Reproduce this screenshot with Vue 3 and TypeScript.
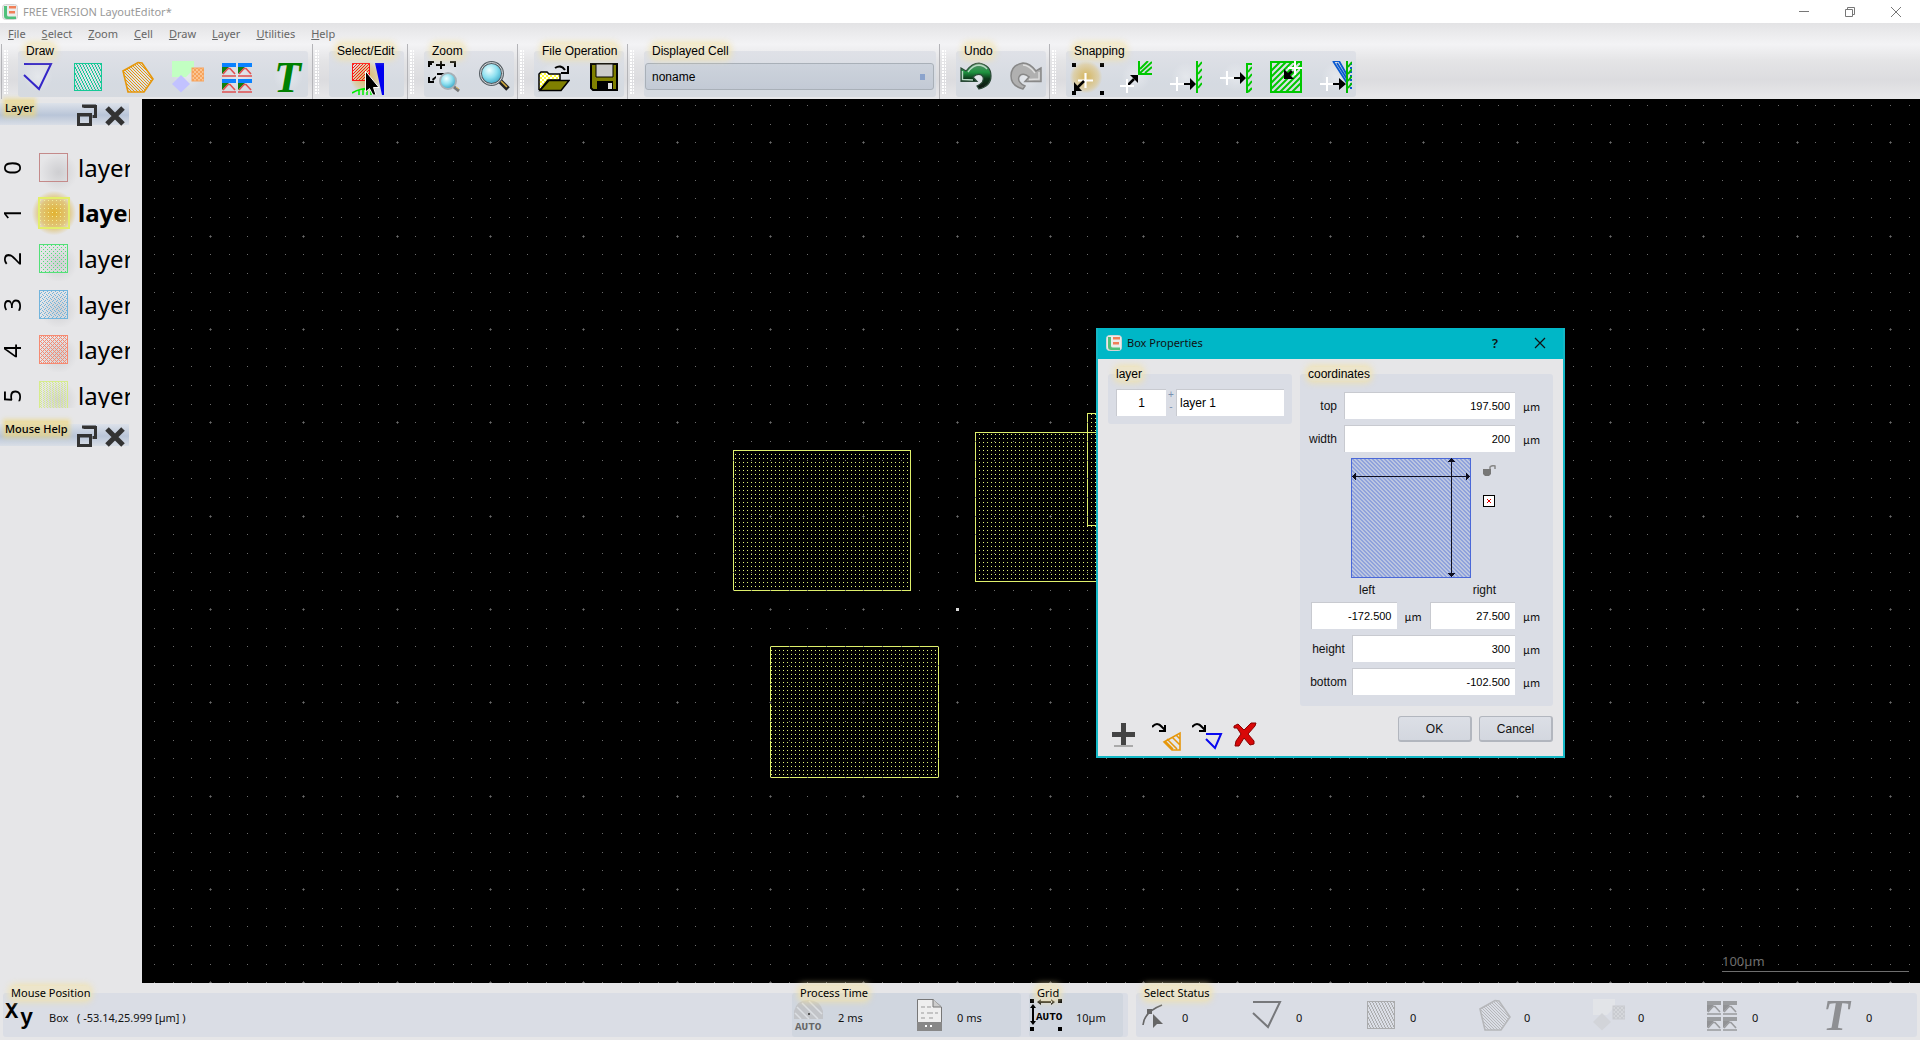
<script setup lang="ts">
import { ref } from 'vue'

interface ToolGroup {
  title: string
  icons: { id: string; name: string; active?: boolean }[]
}

const menus = ['File', 'Select', 'Zoom', 'Cell', 'Draw', 'Layer', 'Utilities', 'Help']

const leftGroups: ToolGroup[] = [
  {
    title: 'Draw',
    icons: [
      { id: 'i-path', name: 'Path' },
      { id: 'i-box', name: 'Box' },
      { id: 'i-polygon', name: 'Polygon' },
      { id: 'i-cellref', name: 'Cell reference' },
      { id: 'i-array', name: 'Cell array' },
      { id: 'i-text', name: 'Text' },
    ],
  },
  { title: 'Select/Edit', icons: [{ id: 'i-select', name: 'Select', active: true }] },
  { title: 'Zoom', icons: [{ id: 'i-zoomfit', name: 'Zoom fit' }, { id: 'i-zoom', name: 'Zoom' }] },
  { title: 'File Operation', icons: [{ id: 'i-open', name: 'Open' }, { id: 'i-save', name: 'Save' }] },
]

const rightGroups: ToolGroup[] = [
  { title: 'Undo', icons: [{ id: 'i-undo', name: 'Undo' }, { id: 'i-redo', name: 'Redo' }] },
  {
    title: 'Snapping',
    icons: [
      { id: 'i-snapgrid', name: 'Snap to grid', active: true },
      { id: 'i-snapcorner', name: 'Snap to corner' },
      { id: 'i-snapedge', name: 'Snap to edge' },
      { id: 'i-snapmid', name: 'Snap to midpoint' },
      { id: 'i-snapinside', name: 'Snap to center' },
      { id: 'i-snapcross', name: 'Snap to intersection' },
    ],
  },
]

const layers = [
  { n: 0, color: '#c48a8a', fill: 'none' },
  { n: 1, color: '#e3ee6a', fill: 'url(#p-l1)', current: true },
  { n: 2, color: '#52e078', fill: 'url(#p-l2)' },
  { n: 3, color: '#72b4dc', fill: 'url(#p-l3)' },
  { n: 4, color: '#f58a72', fill: 'url(#p-l4)' },
  { n: 5, color: '#d6ec8c', fill: 'url(#p-l5)' },
]

const selectStatus = [
  { id: 'i-node', cls: '' },
  { id: 'i-path', cls: 'dim' },
  { id: 'i-box', cls: 'dim strong' },
  { id: 'i-polygon', cls: 'dim' },
  { id: 'i-cellref', cls: 'dim faint' },
  { id: 'i-array', cls: 'dim' },
  { id: 'i-text', cls: 'dim' },
]

const position = 'Box   ( -53.14,25.999 [µm] )'

// Drawing origin on the canvas and the size of ten micrometres.
const origin = { x: 815, y: 510 }
const step = 56 / 3

let minor = ''
let major = ''
for (let j = -27; j <= 60; j++) {
  const y = Math.round(origin.y + j * step)
  for (let i = -43; i <= 100; i++) {
    const x = Math.floor(origin.x + i * step + 0.1)
    minor += `M${x} ${y}h1v1h-1z`
    if (i % 5 === 0 && j % 5 === 0) major += `M${x - 1} ${y}h3v1h-3zM${x} ${y - 1}h1v3h-1z`
  }
}

const shapes = [
  { x: 591, y: 351, w: 177, h: 140 },
  { x: 833, y: 333, w: 210, h: 149 },
  { x: 945, y: 314, w: 130, h: 112 },
  { x: 628, y: 547, w: 168, h: 131 },
]

const cell = ref('noname')
const layerNo = ref(1)
const layerName = ref('layer 1')
const box = ref({ top: '197.500', width: '200', left: '-172.500', right: '27.500', height: '300', bottom: '-102.500' })
</script>

<template>
  <div class="window">
    <svg class="defs" width="0" height="0" aria-hidden="true">
      <defs>
        <pattern id="p-dots" x="1" y="3" width="4" height="4" patternUnits="userSpaceOnUse"><rect width="1" height="1" fill="#e3f57a" /></pattern>
        <pattern id="p-l1" width="4" height="4" patternUnits="userSpaceOnUse"><rect x="1" y="1" width="1" height="1" fill="#f2ee9a" /></pattern>
        <pattern id="p-l2" width="4" height="4" patternUnits="userSpaceOnUse"><path d="M0 0h1v1h-1zM2 2h1v1h-1z" fill="#52e078" /></pattern>
        <pattern id="p-l3" width="4" height="4" patternUnits="userSpaceOnUse"><path d="M0 0h1v1h-1zM2 1h1v1h-1zM1 2h1v1h-1zM3 3h1v1h-1z" fill="#72b4dc" /></pattern>
        <pattern id="p-l4" width="4" height="4" patternUnits="userSpaceOnUse"><path d="M0 0h1v1h-1zM1 1h1v1h-1zM2 2h1v1h-1zM3 3h1v1h-1zM2 0h1v1h-1zM0 2h1v1h-1z" fill="#f58a72" /></pattern>
        <pattern id="p-l5" width="3" height="2" patternUnits="userSpaceOnUse"><path d="M0 0h1v1h-1zM1 1h1v1h-1z" fill="#d6ec8c" /></pattern>
        <pattern id="p-teal" width="3" height="6" patternUnits="userSpaceOnUse"><path d="M0 0h1v2h-1zM1 2h1v2h-1zM2 4h1v2h-1z" fill="#16c896" /></pattern>
        <pattern id="p-orange" width="3" height="3" patternUnits="userSpaceOnUse"><path d="M0 0h1v1h-1zM1 1h1v1h-1zM2 2h1v1h-1z" fill="#e6970a" /></pattern>
        <pattern id="p-red" width="3" height="3" patternUnits="userSpaceOnUse"><path d="M2 0h1v1h-1zM1 1h1v1h-1zM0 2h1v1h-1z" fill="#ff1414" /></pattern>
        <pattern id="p-check" width="4" height="4" patternUnits="userSpaceOnUse"><rect width="4" height="4" fill="#f7a35c" /><path d="M0 0h2v2h-2zM2 2h2v2h-2z" fill="#fbc592" /></pattern>
        <pattern id="p-yellow" width="4" height="4" patternUnits="userSpaceOnUse"><rect width="4" height="4" fill="#fffb3a" /><path d="M0 0h2v2h-2zM2 2h2v2h-2z" fill="#fff" /></pattern>
        <pattern id="p-blue" width="4" height="4" patternUnits="userSpaceOnUse"><rect width="4" height="4" fill="#bcc6e0" /><path d="M0 0h2v1h-2zM1 1h2v1h-2zM2 2h2v1h-2zM3 3h1v1h-1zM0 3h1v1h-1z" fill="#8fa2dc" /></pattern>
        <radialGradient id="g-lens" cx="0.4" cy="0.35" r="0.7">
          <stop offset="0" stop-color="#f0ffff" /><stop offset="0.5" stop-color="#8ee0f0" /><stop offset="1" stop-color="#2e9fc0" />
        </radialGradient>
        <linearGradient id="g-undo" x1="0" y1="0" x2="0" y2="1">
          <stop offset="0" stop-color="#5f8f72" /><stop offset="0.35" stop-color="#1f9440" /><stop offset="0.6" stop-color="#0c3a1a" /><stop offset="1" stop-color="#101010" />
        </linearGradient>

        <symbol id="i-logo" viewBox="0 0 16 16">
          <rect x="0.5" y="0.5" width="15" height="15" rx="3" fill="#ececec" stroke="#d4d4d4" />
          <path d="M2 2h3v9q0 1.500 2 1.500h7v2.500h-9q-3 0-3-3z" fill="#4fc07a" />
          <path d="M7 2h7v2.500h-7zM7 7h6v2.500h-6z" fill="#f08058" />
        </symbol>
        <symbol id="i-path" viewBox="0 0 32 32">
          <path d="M2 3H29L17 28 2 14" fill="none" stroke="#3426c8" stroke-width="2" />
        </symbol>
        <symbol id="i-box" viewBox="0 0 32 32">
          <rect x="2.500" y="2.500" width="27" height="27" fill="url(#p-teal)" stroke="#16c896" shape-rendering="crispEdges" />
        </symbol>
        <symbol id="i-polygon" viewBox="0 0 32 32">
          <path d="M16 1.500L20 2 31 18 22 31H6L1 10z" fill="url(#p-orange)" stroke="#e6970a" stroke-width="1.600" />
        </symbol>
        <symbol id="i-cellref" viewBox="0 0 32 32">
          <path d="M0 0H22V6L18 12 14 16H0z" fill="#c2ffc2" />
          <rect x="20" y="7" width="12" height="13" fill="url(#p-check)" stroke="#f7a35c" />
          <path d="M9 14L18 23 9 31.500 0 23z" fill="#c2c2ff" />
        </symbol>
        <symbol id="i-mini" viewBox="0 0 14 14">
          <path d="M0 0h14v4h-14z" fill="#0a82ff" />
          <path d="M0 4h7l-7 7z" fill="#108010" />
          <path d="M1 11L6 5.500H8L13 11M0 13h14" fill="none" stroke="#e05050" stroke-width="1.600" />
        </symbol>
        <symbol id="i-array" viewBox="0 0 32 32">
          <use href="#i-mini" x="0" y="2" width="14" height="14" />
          <use href="#i-mini" x="16" y="2" width="14" height="14" />
          <use href="#i-mini" x="0" y="18" width="14" height="14" />
          <use href="#i-mini" x="16" y="18" width="14" height="14" />
        </symbol>
        <symbol id="i-text" viewBox="0 0 32 32">
          <text x="2" y="31" font-family="'Liberation Serif', serif" font-size="44" font-weight="700" font-style="italic" fill="#008000">T</text>
        </symbol>
        <symbol id="i-select" viewBox="0 0 32 32">
          <rect x="0.500" y="0.500" width="17" height="17" fill="url(#p-red)" stroke="#ff1414" shape-rendering="crispEdges" />
          <path d="M23 0h9v32h-2L27 18z" fill="#0000f0" />
          <path d="M0 30Q8 25 20 25M7 27v5M11 26v6M15 25v7M19 25v7" fill="none" stroke="#00f000" stroke-width="1.500" />
          <path d="M13.500 8V29L17.500 25.500 21 32H24L21.500 24.500H27z" fill="#000" stroke="#fff" />
        </symbol>
        <symbol id="i-zoomfit" viewBox="0 0 32 32">
          <path d="M0 0h6v2h-4v4h-2zM2 2h2v2h-2zM22 0h6v6h-2v-4h-4zM12 0h2v3h3v2h-3v3h-2v-3h-4v-2h4zM0 16h2v4h4v2h-6zM4 18l4-3v2l-3 3zM9 12h7v2h-7z" fill="#000" />
          <circle cx="20" cy="20" r="8" fill="url(#g-lens)" stroke="#a8b0b6" stroke-width="2" />
          <path d="M26 26L31 30" stroke="#777" stroke-width="3" />
          <path d="M28 26L31 28" stroke="#e8c060" stroke-width="1" />
        </symbol>
        <symbol id="i-zoom" viewBox="0 0 32 32">
          <path d="M22 20L30 28" stroke="#222" stroke-width="5" />
          <path d="M23 20L29 26" stroke="#d8b040" stroke-width="1.500" />
          <circle cx="13.500" cy="12.500" r="11" fill="url(#g-lens)" stroke="#565e64" stroke-width="3" />
          <circle cx="13.500" cy="12.500" r="11" fill="none" stroke="#d8dde0" stroke-width="1" />
        </symbol>
        <symbol id="i-open" viewBox="0 0 32 32">
          <path d="M1 29V13L3 11H9L11 13H22V19H10L2 29" fill="url(#p-yellow)" stroke="#000" stroke-width="1.500" />
          <path d="M2 29.500L11 19.500H31L23 29.500z" fill="#808000" stroke="#000" stroke-width="1.500" />
          <path d="M17 7Q23 3 27 9M30 5V12H23" fill="none" stroke="#000" stroke-width="2" />
        </symbol>
        <symbol id="i-save" viewBox="0 0 32 32">
          <path d="M3 3H29V29H5L3 27z" fill="#808000" stroke="#000" stroke-width="2" />
          <path d="M8 3H25V16H8z" fill="#ccc" stroke="#000" />
          <path d="M9 20H25V29H9z" fill="#000" />
          <path d="M20 22h4v6h-4z" fill="#ddd" />
        </symbol>
        <symbol id="i-undo" viewBox="0 0 32 32">
          <path d="M1 7L6 10Q12 2 19 2Q31 4 31 15Q31 25 19 28L17 25Q25 21 23 16Q21 12 16 14L13 16 17 20.500H1z" fill="url(#g-undo)" stroke="#2c4a38" stroke-width="1.200" />
          <path d="M2.500 10V18.500L13 19M8 11Q13 4 19 4Q24 4.500 27 8" fill="none" stroke="#b8d8c4" stroke-width="1.400" />
        </symbol>
        <symbol id="i-redo" viewBox="0 0 32 32">
          <path d="M31 7L26 10Q20 2 13 2Q1 4 1 15Q1 25 13 28L15 25Q7 21 9 16Q11 12 16 14L19 16 15 20.500H31z" fill="#b0b0b0" stroke="#888" stroke-width="1.500" />
          <path d="M29 11V18L19 18.500M25 12Q19 4 13 4" fill="none" stroke="#dedede" stroke-width="1.400" />
        </symbol>
        <symbol id="i-cross" viewBox="0 0 14 14"><path d="M6 0h2v6h6v2h-6v6h-2v-6h-6v-2h6z" fill="#fff" /></symbol>
        <symbol id="i-snapgrid" viewBox="0 0 32 32">
          <path d="M0 0h4v4h-4zM28 0h4v4h-4zM0 28h4v4h-4zM28 28h4v4h-4z" fill="#000" />
          <use href="#i-cross" x="6" y="10" width="15" height="15" />
          <path d="M12 18L5 25" stroke="#000" stroke-width="2.500" /><path d="M2 19V28H10z" fill="#000" />
        </symbol>
        <symbol id="i-snapcorner" viewBox="0 0 32 32">
          <path d="M19 0V13H32M20 8L28 0M20 12L32 1M25 12L32 6" fill="none" stroke="#00c800" stroke-width="2" />
          <path d="M8 24L14 18" stroke="#000" stroke-width="2.500" /><path d="M10 14H18V22z" fill="#000" />
          <use href="#i-cross" x="0" y="18" width="14" height="14" />
        </symbol>
        <symbol id="i-snapedge" viewBox="0 0 32 32">
          <path d="M27 0V32M28 6L32 1M28 13L32 8M28 20L32 15M28 27L32 22" fill="none" stroke="#00c800" stroke-width="2" />
          <use href="#i-cross" x="0" y="16" width="14" height="14" />
          <path d="M14 22h6v-5l6 6-6 6v-5h-6z" fill="#000" />
        </symbol>
        <symbol id="i-snapmid" viewBox="0 0 32 32">
          <path d="M27 2V32M27 3H32M28 11L32 6M28 18L32 13M28 25L32 20M28 31L32 27" fill="none" stroke="#00c800" stroke-width="2" />
          <use href="#i-cross" x="0" y="10" width="14" height="14" />
          <path d="M14 16h6v-5l6 6-6 6v-5h-6z" fill="#000" />
        </symbol>
        <symbol id="i-snapinside" viewBox="0 0 32 32">
          <path d="M1 1H31V31H1zM1 10L10 1M1 16L16 1M1 22L22 1M1 28L28 1M4 31L31 4M10 31L31 10M16 31L31 16M22 31L31 22" fill="none" stroke="#00c800" stroke-width="2" />
          <use href="#i-cross" x="18" y="0" width="14" height="14" />
          <path d="M22 10L17 15" stroke="#000" stroke-width="3" /><path d="M14 8V18H24z" fill="#000" />
        </symbol>
        <symbol id="i-snapcross" viewBox="0 0 32 32">
          <path d="M13 0L27 22M13 0H19L27 14M17 2L27 18" fill="none" stroke="#0a5ad0" stroke-width="1.800" />
          <path d="M31 2V30" stroke="#0a5ad0" stroke-width="2" stroke-dasharray="2 2" />
          <path d="M27 0V32M28 6L32 1M28 13L32 8M28 20L32 15M28 27L32 22" fill="none" stroke="#00b800" stroke-width="2" />
          <use href="#i-cross" x="0" y="16" width="14" height="14" />
          <path d="M13 22h6v-5l7 6-7 6v-5h-6z" fill="#000" />
        </symbol>
        <symbol id="i-node" viewBox="0 0 32 32">
          <path d="M6 26Q7 13 25 6" fill="none" stroke="#666" stroke-width="1.600" />
          <path d="M10 10h5v5h-5zM16 15V29L20 25H26z" fill="#666" />
        </symbol>
      </defs>
    </svg>

    <header class="titlebar">
      <svg class="logo"><use href="#i-logo" /></svg>
      <span class="title">FREE VERSION LayoutEditor*</span>
      <div class="win-btns">
        <button aria-label="Minimize"><svg width="12" height="12"><path d="M1 5.500h10" stroke="#777" /></svg></button>
        <button aria-label="Restore"><svg width="12" height="12"><path d="M1.500 3.500h7v7h-7zM3.500 3.500v-2h7v7h-2" fill="none" stroke="#777" /></svg></button>
        <button aria-label="Close"><svg width="12" height="12"><path d="M1 1L11 11M11 1L1 11" stroke="#777" /></svg></button>
      </div>
    </header>

    <div class="chrome">
      <nav class="menubar">
        <a v-for="m in menus" :key="m" href="#"><u>{{ m[0] }}</u>{{ m.slice(1) }}</a>
      </nav>

      <div class="toolbars">
        <section v-for="g in leftGroups" :key="g.title" class="toolbar">
          <div class="group" :class="{ single: g.icons.length === 1 }">
            <span class="group-title">{{ g.title }}</span>
            <button v-for="i in g.icons" :key="i.id" :aria-label="i.name" :class="{ active: i.active }">
              <svg><use :href="'#' + i.id" /></svg>
            </button>
          </div>
        </section>
        <section class="toolbar">
          <div class="group cell-group">
            <label class="group-title" for="cell">Displayed Cell</label>
            <select id="cell" v-model="cell"><option>noname</option></select>
          </div>
        </section>
        <section v-for="g in rightGroups" :key="g.title" class="toolbar">
          <div class="group">
            <span class="group-title">{{ g.title }}</span>
            <button v-for="i in g.icons" :key="i.id" :aria-label="i.name" :class="{ active: i.active }">
              <svg><use :href="'#' + i.id" /></svg>
            </button>
          </div>
        </section>
      </div>
    </div>

    <main class="work">
      <aside class="side">
        <div class="dock-head">
          <h2><span>Layer</span></h2>
          <button aria-label="Float"><svg width="20" height="22"><path d="M6.500 2.500h12v10h-3M5 2h14" fill="none" stroke="#333" stroke-width="3" /><path d="M1.500 10.500h12v10h-12zM1 11h13" fill="none" stroke="#333" stroke-width="3" /></svg></button>
          <button aria-label="Close"><svg width="20" height="22"><path d="M2 4L18 20M18 4L2 20" stroke="#333" stroke-width="5" /></svg></button>
        </div>
        <div class="layer-view">
          <ul class="layers">
            <li v-for="l in layers" :key="l.n" :class="{ current: l.current }">
              <span class="num">{{ l.n }}</span>
              <svg class="swatch" width="46" height="44" shape-rendering="crispEdges">
                <rect v-if="l.current" x="8" y="7" width="30" height="30" :fill="l.fill" :stroke="l.color" stroke-width="2" />
                <rect v-else x="8.500" y="7.500" width="28" height="28" :fill="l.fill" :stroke="l.color" />
              </svg>
              <span class="name">layer {{ l.n }}</span>
            </li>
          </ul>
        </div>
        <div class="dock-head">
          <h2><span>Mouse Help</span></h2>
          <button aria-label="Float"><svg width="20" height="22"><path d="M6.500 2.500h12v10h-3M5 2h14" fill="none" stroke="#333" stroke-width="3" /><path d="M1.500 10.500h12v10h-12zM1 11h13" fill="none" stroke="#333" stroke-width="3" /></svg></button>
          <button aria-label="Close"><svg width="20" height="22"><path d="M2 4L18 20M18 4L2 20" stroke="#333" stroke-width="5" /></svg></button>
        </div>
      </aside>

      <div class="stage">
        <svg class="drawing" shape-rendering="crispEdges">
          <rect v-for="(s, k) in shapes" :key="k" :x="s.x + 0.5" :y="s.y + 0.5" :width="s.w" :height="s.h" fill="url(#p-dots)" stroke="#dff06c" />
          <path :d="major" fill="#4a4a4a" />
          <path :d="minor" fill="#6c6c6c" />
          <rect :x="origin.x - 1" :y="origin.y - 1" width="3" height="3" fill="#d8d8d8" />
        </svg>
        <div class="scale">100µm</div>

        <section class="dialog" role="dialog" aria-label="Box Properties">
          <div class="dlg-title">
            <svg class="logo"><use href="#i-logo" /></svg>
            <span class="title">Box Properties</span>
            <button aria-label="Help">?</button>
            <button aria-label="Close"><svg width="12" height="12"><path d="M1 1L11 11M11 1L1 11" stroke="#111" stroke-width="1.200" /></svg></button>
          </div>
          <div class="dlg-body">
            <div class="panel layer-panel">
              <span class="group-title">layer</span>
              <input v-model="layerNo" class="lnum" aria-label="Layer number">
              <div class="spin"><button aria-label="Increase">+</button><button aria-label="Decrease">-</button></div>
              <input v-model="layerName" class="lname" aria-label="Layer name">
            </div>
            <div class="panel coords">
              <span class="group-title">coordinates</span>
              <div class="row"><label for="top">top</label><input id="top" v-model="box.top"><span class="unit">μm</span></div>
              <div class="row"><label for="width">width</label><input id="width" v-model="box.width"><span class="unit">μm</span></div>
              <div class="figure">
                <svg width="120" height="120" shape-rendering="crispEdges">
                  <rect x="0.500" y="0.500" width="119" height="119" fill="url(#p-blue)" stroke="#4a68d8" />
                  <path d="M1 18.500H119M100.500 1V119" stroke="#101020" />
                  <path d="M1 18.500l4-3.500v7zM119 18.500l-4-3.500v7zM100.500 0l4 4h-8zM100.500 119l4-4h-8z" fill="#101020" />
                </svg>
                <div class="marks">
                  <svg width="14" height="12"><path d="M0 4h8v5l-2 2h-4l-2-2z" fill="#777" /><path d="M7 4V2Q9 0 12 1V4" fill="none" stroke="#888" stroke-width="1.500" /></svg>
                  <svg width="12" height="12" shape-rendering="crispEdges"><rect x="0.500" y="0.500" width="11" height="11" fill="#fff" stroke="#000" /><path d="M4 4L8 8M8 4L4 8" stroke="#e80000" shape-rendering="auto" /></svg>
                </div>
              </div>
              <div class="pair-labels"><label for="left">left</label><label for="right">right</label></div>
              <div class="row pair"><input id="left" v-model="box.left"><span class="unit">μm</span><input id="right" v-model="box.right"><span class="unit">μm</span></div>
              <div class="row low"><label for="height">height</label><input id="height" v-model="box.height"><span class="unit">μm</span></div>
              <div class="row low"><label for="bottom">bottom</label><input id="bottom" v-model="box.bottom"><span class="unit">μm</span></div>
            </div>
          </div>
          <div class="dlg-foot">
            <button class="tool" aria-label="Add"><svg width="32" height="30"><path d="M9 1h5v9h9v5h-9v8h-5v-8h-9v-5h9z" fill="#444" /><path d="M2 24h19" stroke="#aaa" stroke-width="2" /></svg></button>
            <button class="tool" aria-label="To polygon"><svg width="32" height="30"><path d="M0 5Q5 -1 10 5L13 8M13 3V9H7" fill="none" stroke="#000" stroke-width="2" /><path d="M28 11V28H20L12 20zM15 17L25 27M20 15L28 23M24 13L28 17M13 19L21 27" fill="none" stroke="#e6970a" stroke-width="1.600" /></svg></button>
            <button class="tool" aria-label="To path"><svg width="32" height="30"><path d="M0 5Q5 -1 10 5L13 8M13 3V9H7" fill="none" stroke="#000" stroke-width="2" /><path d="M14 12H29L23 26 14 17" fill="none" stroke="#0a0af0" stroke-width="2" /></svg></button>
            <button class="tool" aria-label="Delete"><svg width="32" height="30"><path d="M2 4L6 2L12 8L19 1H24L23 4L16 12L22 19V22L18 23L12 16L7 24H3L4 19L9 12L5 6H2z" fill="#d80808" stroke="#8a0000" /></svg></button>
            <button class="push ok">OK</button>
            <button class="push">Cancel</button>
          </div>
        </section>
      </div>
    </main>

    <footer class="status">
      <div class="sbox mouse">
        <span class="group-title">Mouse Position</span>
        <svg class="ic" aria-hidden="true"><text x="1" y="19" class="xy">X</text><text x="16" y="25" class="xy">y</text></svg>
        <span class="val pos">{{ position }}</span>
        <div class="sbox inner time">
          <span class="group-title">Process Time</span>
          <svg class="ic" aria-hidden="true">
            <path d="M1 20V12Q4 1 15 1Q27 1 30 12V20z" fill="#c2c4c8" /><path d="M4 8L16 20M9 4L25 20M16 2L29 15M2 14L8 20" stroke="#dcdfe3" stroke-width="1.500" /><path d="M15 14h2v2h-2z" fill="#555" />
            <text x="2" y="31" class="auto grey">AUTO</text>
          </svg>
          <span class="val">2 ms</span>
          <svg class="ic page" aria-hidden="true"><path d="M0.500 0.500H16L24.500 8V31.500H0.500z" fill="#eee" stroke="#777" /><path d="M0 23H25V32H0z" fill="#888" /><path d="M16 0V8H24" fill="#ccc" stroke="#777" /><path d="M4 8h4M10 8h4M4 14h3M10 14h6M18 14h3M4 19h4M12 19h4" stroke="#999" /><path d="M8 27h2M13 27h2" stroke="#fff" stroke-width="2" /></svg>
          <span class="val">0 ms</span>
        </div>
        <div class="sbox inner grid">
          <span class="group-title">Grid</span>
          <svg class="ic" aria-hidden="true">
            <path d="M0 0h4v4h-4zM28 0h4v4h-4zM0 28h4v4h-4zM28 28h4v4h-4zM10 2h12v2h-12zM7 3l4-3v6zM25 3l-4-3v6zM2 9h2v13h-2zM3 5l3 4h-6zM3 26l3-4h-6z" fill="#000" />
            <text x="6" y="21" class="auto">AUTO</text>
          </svg>
          <span class="val">10µm</span>
        </div>
      </div>
      <div class="sbox selected">
        <span class="group-title">Select Status</span>
        <div v-for="s in selectStatus" :key="s.id" class="stat">
          <svg class="ic" :class="s.cls" aria-hidden="true"><use :href="'#' + s.id" /></svg>
          <span class="val">0</span>
        </div>
      </div>
    </footer>
  </div>
</template>

<style>
body { margin: 0; background: #e6e6e8; }
</style>

<style scoped>
.window {
  display: flex;
  flex-direction: column;
  height: 100vh;
  font-family: 'Noto Sans', sans-serif;
  font-size: 11px;
  line-height: 16px;
  color: #111;
  background: #e6e6e8;
  overflow: hidden;
}
.window * { box-sizing: border-box; }
.defs { position: absolute; }
button { padding: 0; border: 0; background: none; font: inherit; color: inherit; }
svg { display: block; flex: none; }
.logo { width: 16px; height: 16px; }

.titlebar { display: flex; align-items: center; flex: none; height: 23px; padding: 0 1px 0 2px; background: #fff; color: #999; gap: 5px; }
.titlebar .title { flex: 1; }
.win-btns { display: flex; height: 20px; }
.win-btns button { display: flex; align-items: center; justify-content: center; width: 46px; }

.chrome { flex: none; background: linear-gradient(#e3e3e5, #f3f3f5 28%, #e4e4e6 50%, #dcdcdf 75%, #e8e8ea); }
.menubar { display: flex; height: 21px; }
.menubar a { padding: 3px 8px 0; color: #666; text-decoration: none; }

.toolbars { display: flex; height: 55px; padding-left: 1px; }
.toolbar { flex: none; display: flex; position: relative; padding: 7px 3px 2px 16px; border-left: 1px solid #b4b4b8; }
.toolbar:first-child { padding-right: 4px; }
.toolbar::before {
  content: '';
  position: absolute;
  left: 2px;
  top: 6px;
  width: 4px;
  height: 44px;
  background: radial-gradient(circle at 1px 1px, #fff 1px, transparent 1px) 0 0 / 3px 3px;
}
.group {
  position: relative;
  display: flex;
  gap: 18px;
  height: 46px;
  padding: 10px 4px 4px;
  border-radius: 3px;
  background: linear-gradient(#dfe1e7, #d5dae1 70%, #d6dae0);
}
.group.single { padding: 10px 22px 4px 21px; }
.group button { width: 32px; height: 32px; background: radial-gradient(circle, rgba(255, 255, 255, 0.35), transparent 65%); }
.group button svg { width: 32px; height: 32px; overflow: visible; }
.group button.active { padding: 2px 0 0 2px; background: radial-gradient(circle, rgba(214, 178, 80, 0.9), rgba(224, 196, 120, 0.5) 55%, transparent 72%); }
.group-title {
  position: absolute;
  left: 8px;
  top: -7px;
  font: 12px/14px 'Liberation Sans', sans-serif;
  color: #000;
  white-space: nowrap;
  border-radius: 4px;
  background: rgba(243, 228, 176, 0.55);
  box-shadow: 0 0 6px 2px rgba(243, 226, 166, 0.8);
}
.cell-group { width: 292px; padding: 12px 2px 7px 1px; }
.cell-group select {
  width: 100%;
  height: 27px;
  padding: 0 6px;
  appearance: none;
  border: 1px solid #a9b0b8;
  border-radius: 3px;
  font: 12px/14px 'Liberation Sans', sans-serif;
  color: #000;
  background: linear-gradient(#8ba3cc, #8ba3cc) right 8px center / 5px 6px no-repeat, linear-gradient(#cdd3dc, #c3cad5);
}

.work { display: flex; flex: 1; min-height: 0; }
.side { flex: none; width: 142px; padding-top: 4px; }
.dock-head { display: flex; width: 129px; height: 22px; gap: 8px; padding: 1px 4px 0 5px; background: linear-gradient(#dde2ea, #b9c5d8 55%, #d9dee6); }
.dock-head h2 { flex: 1; margin: -3px 0 0; font-size: 11px; line-height: 14px; font-weight: 500; color: #000; white-space: nowrap; }
.dock-head h2 span { background: rgba(236, 214, 120, 0.6); box-shadow: 0 0 4px 2px rgba(236, 214, 120, 0.6); }
.layer-view { width: 130px; height: 263px; margin: 20px 0 16px; overflow: hidden; }
.layers { display: grid; grid-template-rows: repeat(6, 1fr); height: 274px; margin: 0; padding: 0; list-style: none; }
.layers li { display: flex; align-items: center; font-size: 24px; line-height: 30px; color: #000; white-space: nowrap; }
.num { width: 24px; margin-right: 7px; line-height: 24px; text-align: center; writing-mode: vertical-rl; transform: rotate(180deg); }
.swatch { background: radial-gradient(circle at 60% 60%, rgba(170, 170, 175, 0.4), transparent 50%); }
.current .swatch { background: radial-gradient(circle, #e2b230, rgba(222, 184, 80, 0.7) 45%, transparent 70%); }
.name { margin-left: 1px; }
.current .name { font-weight: 700; }

.stage { position: relative; flex: 1; background: #000; overflow: hidden; }
.drawing { width: 100%; height: 100%; }
.scale { position: absolute; right: 11px; bottom: 11px; width: 187px; border-bottom: 1px solid #6e6e6e; font-size: 13px; line-height: 18px; padding-bottom: 1px; color: #6e6e6e; }

.dialog { position: absolute; left: 954px; top: 229px; width: 469px; border: 2px solid #14b8c6; border-top: 0; background: #e6e6e8; font: 12px/14px 'Liberation Sans', sans-serif; }
.dlg-title { display: flex; align-items: center; height: 31px; padding: 0 3px 1px 8px; gap: 5px; background: #00b7c7; font: 11px/16px 'Noto Sans', sans-serif; }
.dlg-title .title { flex: 1; }
.dlg-title button { display: flex; align-items: center; justify-content: center; width: 40px; height: 30px; font-size: 13px; font-weight: 600; }
.dlg-body { display: grid; grid-template-columns: 184px 1fr; align-items: start; gap: 8px; padding: 15px 10px 10px; }
.panel { position: relative; border-radius: 3px; background: #dadde5; }
.layer-panel { display: flex; height: 50px; padding: 15px 8px 8px; }
input { width: 0; height: 27px; padding: 0 5px; border: 0; border-top: 1px solid #c8cad0; border-left: 1px solid #c8cad0; border-radius: 0; background: #fff; font: 11px/14px 'Liberation Sans', sans-serif; color: #000; text-align: right; }
.lnum { flex: 0 0 50px; text-align: center; font-size: 12px; }
.spin { display: flex; flex-direction: column; width: 10px; }
.spin button { height: 12px; font-size: 10px; line-height: 12px; color: #7890b0; }
.lname { flex: 1; padding: 0 3px; font-size: 12px; text-align: left; }
.coords { height: 332px; padding: 18px 11px 0; }
.row { display: flex; align-items: center; margin-bottom: 6px; }
.row label { width: 26px; margin-right: 7px; display: flex; justify-content: flex-end; }
.row.low label { width: 35px; margin-right: 6px; justify-content: center; }
.row input { flex: 1; }
.unit { flex: none; width: 27px; padding-left: 8px; font: 11px/14px 'Noto Sans CJK JP', sans-serif; }
.pair .unit:nth-child(2) { width: 33px; }
.figure { display: flex; gap: 12px; padding-left: 40px; }
.marks { display: flex; flex-direction: column; gap: 18px; padding-top: 7px; }
.pair-labels { display: flex; justify-content: space-between; height: 24px; padding: 5px 46px 0 48px; }
.dlg-foot { display: flex; height: 40px; padding: 0 10px 0 14px; }
.tool { width: 40px; height: 30px; margin-top: 6px; }
.push { width: 74px; height: 26px; margin-left: 7px; border: 1px solid #b2b6be; border-right-width: 2px; border-bottom-width: 2px; border-radius: 3px; background: linear-gradient(#dcdfe6, #d3d7df); }
.ok { margin-left: auto; }

.status { display: flex; flex: none; height: 57px; gap: 8px; padding: 10px 3px 3px; }
.sbox { position: relative; display: flex; align-items: center; height: 44px; border-radius: 3px; background: #dadde5; }
.status .group-title { left: 8px; font: 11px/14px 'Noto Sans', sans-serif; }
.mouse { flex: 1; padding: 0 5px 0 1px; }
.selected { flex: none; width: 781px; padding-left: 1px; display: grid; grid-template-columns: repeat(6, 114px) auto; }
.sbox.inner { background: #d0d6df; }
.ic { width: 32px; height: 32px; overflow: visible; }
.pos { flex: 1; margin-left: 13px; white-space: pre; }
.val { padding-top: 6px; }
.time { width: 229px; margin-right: 8px; padding-left: 1px; }
.time .val { width: 79px; margin-left: 13px; }
.time .page { width: 25px; }
.time .page + .val { width: auto; margin-left: 15px; }
.grid { width: 94px; padding-left: 1px; }
.grid .val { margin-left: 14px; }
.stat { display: flex; align-items: center; gap: 13px; }
.xy { font: 22px 'Liberation Mono', monospace; font-weight: 700; }
.auto { font: 700 11px 'Liberation Mono', monospace; }
.grey { fill: #666; }
.dim { filter: grayscale(1) opacity(0.6); }
.strong { filter: grayscale(1) opacity(0.8); }
.faint { filter: grayscale(1) opacity(0.4); }
</style>
